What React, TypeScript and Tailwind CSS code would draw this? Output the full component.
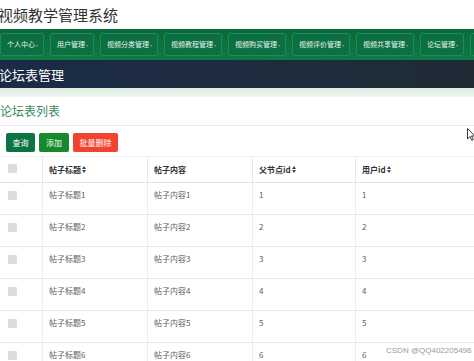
import React from "react";

const navItems = ["个人中心", "用户管理", "视频分类管理", "视频教程管理", "视频购买管理", "视频评价管理", "视频共享管理", "论坛管理", "视频"];

const rows = [1, 2, 3, 4, 5, 6];

function Sort() {
  return (
    <svg width="4" height="7" viewBox="0 0 4 7" className="inline-block ml-[1px] align-middle">
      <path d="M0 3 L2 0 L4 3 Z" fill="#444" />
      <path d="M0 4 L2 7 L4 4 Z" fill="#444" />
    </svg>
  );
}

function Box() {
  return <div className="w-[9px] h-[9px] bg-[#dcdcdc] rounded-[1px]" />;
}

export default function App() {
  const font = { fontFamily: '"Microsoft YaHei", "Noto Sans CJK SC", "Noto Sans", sans-serif' };
  return (
    <div className="relative w-[474px] h-[361px] overflow-hidden bg-white" style={font}>
      <div className="h-[29px] flex items-center -ml-[2px] text-[15px] text-[#333] leading-none">视频教学管理系统</div>
      <div className="h-[31px] bg-gradient-to-b from-[#0a6a3c] to-[#0c7b46] flex items-center gap-[6px] overflow-hidden whitespace-nowrap">
        {navItems.map((n, i) => (
          <div key={i} className="shrink-0 h-[23px] pl-[6px] pr-[5px] flex items-center border border-[#25885a] rounded-[3px] text-[7px] text-[#e8f3ec] bg-[#0b7041]">
            {n}
            <span className="ml-[1px] text-[4px] text-[#6fb08c]">▾</span>
          </div>
        ))}
      </div>
      <div className="h-[28px] bg-gradient-to-r from-[#1b2b47] to-[#1f2c36] flex items-center -ml-[1px] text-[13px] text-white leading-none">论坛表管理</div>
      <div className="h-[9px] bg-gradient-to-b from-[#dcecdf] to-[#eef6f0]" />
      <div className="h-[29px] flex items-center border-b border-[#ececec] text-[12px] text-[#3a8a5d] leading-none">论坛表列表</div>
      <div className="flex gap-[4px] pl-[6px] mt-[7px] h-[19px]">
        <div className="w-[29px] h-full rounded-[2px] bg-[#0b7443] text-white text-[8px] flex items-center justify-center">查询</div>
        <div className="w-[30px] h-full rounded-[2px] bg-[#158a2c] text-white text-[8px] flex items-center justify-center">添加</div>
        <div className="w-[45px] h-full rounded-[2px] bg-[#f2432e] text-white text-[8px] flex items-center justify-center">批量删除</div>
      </div>
      <div className="mt-[4px] border-t border-[#efefef] text-[8px]">
        <div className="flex h-[26px] border-b border-[#e4e4e4] text-[#333] font-bold">
          <div className="w-[42px] shrink-0 pl-[8px] pt-[7px]"><Box /></div>
          <div className="w-[105px] shrink-0 border-l border-[#e8e8e8] pl-[6px] flex items-center">帖子标题<Sort /></div>
          <div className="w-[105px] shrink-0 border-l border-[#e8e8e8] pl-[6px] flex items-center">帖子内容</div>
          <div className="w-[103px] shrink-0 border-l border-[#e8e8e8] pl-[6px] flex items-center">父节点id<Sort /></div>
          <div className="flex-1 border-l border-[#e8e8e8] pl-[6px] flex items-center">用户id<Sort /></div>
        </div>
        {rows.map((r) => (
          <div key={r} className="flex h-[32px] border-b border-[#e8e8e8] text-[#5c5c5c]">
            <div className="w-[42px] shrink-0 pl-[8px] pt-[8px]"><Box /></div>
            <div className="w-[105px] shrink-0 border-l border-[#ececec] pl-[6px] pt-[6px]">帖子标题{r}</div>
            <div className="w-[105px] shrink-0 border-l border-[#ececec] pl-[6px] pt-[6px]">帖子内容{r}</div>
            <div className="w-[103px] shrink-0 border-l border-[#ececec] pl-[6px] pt-[6px]">{r}</div>
            <div className="flex-1 border-l border-[#ececec] pl-[6px] pt-[6px]">{r}</div>
          </div>
        ))}
      </div>
      <svg className="absolute left-[467px] top-[128px]" width="8" height="13" viewBox="0 0 8 13">
        <path d="M0.5 0.5 L0.5 11 L3 8.5 L4.8 12.3 L6.3 11.6 L4.6 8 L7.8 8 Z" fill="#fff" stroke="#222" strokeWidth="0.9" />
      </svg>
      <div className="absolute left-[386px] top-[347px] text-[8px] text-[#9a9a9a] leading-none" style={{ fontFamily: '"Liberation Sans", Arial, sans-serif' }}>CSDN @QQ402205496</div>
    </div>
  );
}
